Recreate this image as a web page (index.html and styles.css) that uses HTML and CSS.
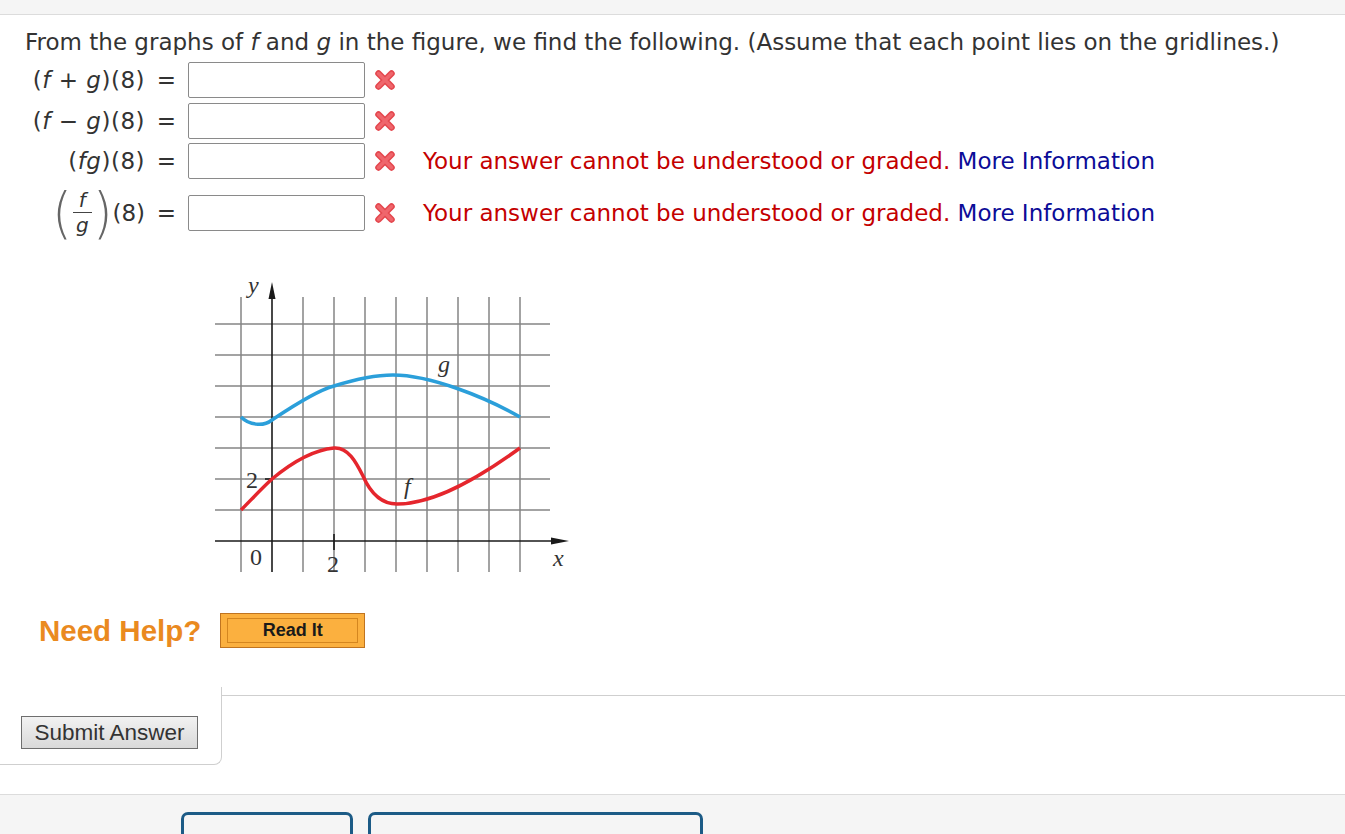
FILE: index.html
```html
<!DOCTYPE html>
<html lang="en">
<head>
<meta charset="utf-8">
<title>Combining functions</title>
<link rel="stylesheet" href="styles.css">
</head>
<body>
<div class="topbar"></div>
<main class="question">
  <p class="prompt">From the graphs of <i>f</i> and <i>g</i> in the figure, we find the following. (Assume that each point lies on the gridlines.)</p>
  <div class="answers">
    <span class="label">(<i>f</i> + <i>g</i>)(8)</span>
    <span class="eq">=</span>
    <span class="field"></span>
    <span class="mark"><svg width="24" height="24" viewBox="0 0 24 24"><path d="M5.5 5.5 L18.5 18.5 M18.5 5.5 L5.5 18.5" stroke="#e4474e" stroke-width="6.5" stroke-linecap="round"/><path d="M5.5 5.5 L18.5 18.5 M18.5 5.5 L5.5 18.5" stroke="#ef666c" stroke-width="3.5" stroke-linecap="round"/></svg></span>
    <span class="msg"></span>

    <span class="label">(<i>f</i> &minus; <i>g</i>)(8)</span>
    <span class="eq">=</span>
    <span class="field"></span>
    <span class="mark"><svg width="24" height="24" viewBox="0 0 24 24"><path d="M5.5 5.5 L18.5 18.5 M18.5 5.5 L5.5 18.5" stroke="#e4474e" stroke-width="6.5" stroke-linecap="round"/><path d="M5.5 5.5 L18.5 18.5 M18.5 5.5 L5.5 18.5" stroke="#ef666c" stroke-width="3.5" stroke-linecap="round"/></svg></span>
    <span class="msg"></span>

    <span class="label">(<i>fg</i>)(8)</span>
    <span class="eq">=</span>
    <span class="field"></span>
    <span class="mark"><svg width="24" height="24" viewBox="0 0 24 24"><path d="M5.5 5.5 L18.5 18.5 M18.5 5.5 L5.5 18.5" stroke="#e4474e" stroke-width="6.5" stroke-linecap="round"/><path d="M5.5 5.5 L18.5 18.5 M18.5 5.5 L5.5 18.5" stroke="#ef666c" stroke-width="3.5" stroke-linecap="round"/></svg></span>
    <span class="msg">Your answer cannot be understood or graded. <a href="#">More Information</a></span>

    <span class="label frac-label"><span class="paren">(</span><span class="frac"><i class="num">f</i><i class="den">g</i></span><span class="paren">)</span>(8)</span>
    <span class="eq">=</span>
    <span class="field"></span>
    <span class="mark"><svg width="24" height="24" viewBox="0 0 24 24"><path d="M5.5 5.5 L18.5 18.5 M18.5 5.5 L5.5 18.5" stroke="#e4474e" stroke-width="6.5" stroke-linecap="round"/><path d="M5.5 5.5 L18.5 18.5 M18.5 5.5 L5.5 18.5" stroke="#ef666c" stroke-width="3.5" stroke-linecap="round"/></svg></span>
    <span class="msg">Your answer cannot be understood or graded. <a href="#">More Information</a></span>
  </div>

  <svg class="graph" width="370" height="310" viewBox="0 0 370 310">
    <g stroke="#858585" stroke-width="1.5" fill="none">
      <path d="M36 25V300 M98 25V300 M129 25V300 M160 25V300 M191 25V300 M222 25V300 M253 25V300 M284 25V300 M315 25V300"/>
      <path d="M10 52H345 M10 83H345 M10 114H345 M10 145H345 M10 176H345 M10 207H345 M10 238H345"/>
    </g>
    <g stroke="#1a1a1a" stroke-width="1.6">
      <path d="M67 300V22"/>
      <path d="M10 269H350"/>
      <path d="M129 262V278"/>
      <path d="M60 207H67"/>
    </g>
    <polygon points="67,10 63.5,27 70.5,27" fill="#1a1a1a"/>
    <polygon points="364,269 346,265.5 346,272.5" fill="#1a1a1a"/>
    <path d="M36,145 C44,153 58,155 67,148 C82,138 110,119 129,114 C148,108 168,103 188,103 C225,103 280,125 315,145" stroke="#2b9fda" stroke-width="3.5" fill="none"/>
    <path d="M36,238 C46,228 56,217 67,207 C85,192 108,178 129,176 C143,175 151,190 158,204 C165,220 175,232 192,232 C230,232 275,205 315,176" stroke="#e5262d" stroke-width="3.5" fill="none"/>
    <g font-family="'Liberation Serif', 'Times New Roman', serif" fill="#333" font-size="24">
      <text x="43" y="21" font-style="italic">y</text>
      <text x="348" y="294" font-style="italic">x</text>
      <text x="233" y="100" font-style="italic">g</text>
      <text x="199" y="222" font-style="italic">f</text>
      <text x="45" y="293">0</text>
      <text x="122" y="300">2</text>
      <text x="41" y="216">2</text>
    </g>
  </svg>

  <div class="help">
    <span class="need">Need Help?</span>
    <button class="readit" type="button"><span>Read It</span></button>
  </div>
</main>

<div class="submit-row">
  <div class="submit-tab"><button class="submit" type="button">Submit Answer</button></div>
  <div class="submit-rest"></div>
</div>

<footer class="footer">
  <div class="fbox fbox-a"></div>
  <div class="fbox fbox-b"></div>
</footer>
</body>
</html>
```
FILE: styles.css
```css
html, body {
  margin: 0;
  padding: 0;
  background: #fff;
}
body {
  font-family: "DejaVu Sans", Verdana, sans-serif;
  color: #333;
  height: 834px;
  overflow: hidden;
}
.topbar {
  height: 14px;
  background: #f5f5f5;
  border-bottom: 1px solid #dcdcdc;
}
.question {
  padding: 0 25px;
}
.prompt {
  margin: 13px 0 0;
  font-size: 23px;
  line-height: 28px;
}
.answers {
  display: grid;
  grid-template-columns: 120px 43px 177px 58px auto;
  grid-template-rows: 40px 41px 40px 63px;
  align-items: center;
  margin-top: 4px;
  font-size: 23px;
  line-height: 28px;
}
.label {
  text-align: right;
  white-space: nowrap;
  letter-spacing: 0.5px;
}
.eq {
  text-align: center;
}
.field {
  display: block;
  width: 177px;
  height: 36px;
  box-sizing: border-box;
  border: 1px solid #8a8a8a;
  border-radius: 2px;
  background: #fff;
}
.mark {
  display: flex;
  padding-left: 8px;
}
.msg {
  color: #c40000;
  white-space: nowrap;
}
.msg a {
  color: #0c0c98;
  text-decoration: none;
}
.frac-label {
  display: flex;
  justify-content: flex-end;
  align-items: center;
  letter-spacing: 0;
}
.paren {
  font-size: 50px;
  font-weight: 200;
  line-height: 50px;
  color: #666;
  transform: scaleY(1.1);
}
.frac {
  display: inline-flex;
  flex-direction: column;
  align-items: center;
  font-size: 20px;
  line-height: 24px;
  margin: 0 1px;
}
.frac .num {
  border-bottom: 1px solid #444;
  padding: 0 6px;
}
.graph {
  display: block;
  margin: 28px 0 0 180px;
}
.help {
  display: flex;
  align-items: center;
  gap: 19px;
  margin: 31px 0 0 14px;
}
.need {
  font: bold 29.5px "Liberation Sans", Arial, sans-serif;
  color: #ea8a1f;
}
.readit {
  width: 145px;
  height: 35px;
  box-sizing: border-box;
  padding: 4px 6px;
  background: #fbb03f;
  border: 1px solid #c07420;
  cursor: pointer;
}
.readit span {
  display: flex;
  align-items: center;
  justify-content: center;
  height: 100%;
  box-sizing: border-box;
  border: 1px solid #d4861f;
  font: bold 18px "Liberation Sans", Arial, sans-serif;
  color: #1a1a1a;
}
.submit-row {
  display: flex;
  align-items: flex-start;
  margin-top: 39px;
}
.submit-tab {
  width: 222px;
  box-sizing: border-box;
  border-right: 1px solid #cfcfcf;
  border-bottom: 1px solid #cfcfcf;
  border-bottom-right-radius: 8px;
  padding: 29px 0 15px 21px;
}
.submit-rest {
  flex: 1;
  margin-top: 8px;
  border-top: 1px solid #cfcfcf;
}
.submit {
  display: block;
  width: 177px;
  height: 33px;
  padding: 0;
  font: 22.5px "Liberation Sans", Arial, sans-serif;
  color: #333;
  background: linear-gradient(#f2f2f2, #d9d9d9);
  border: 1px solid #6e6e6e;
}
.footer {
  margin-top: 29px;
  height: 40px;
  overflow: hidden;
  box-sizing: border-box;
  border-top: 1px solid #dcdcdc;
  background: #f5f5f5;
  display: flex;
  gap: 15px;
  padding: 17px 0 0 181px;
}
.fbox {
  height: 40px;
  flex: none;
  box-sizing: border-box;
  border: 3px solid #1c5b86;
  border-radius: 7px 7px 0 0;
}
.fbox-a {
  width: 172px;
}
.fbox-b {
  width: 335px;
}
```
